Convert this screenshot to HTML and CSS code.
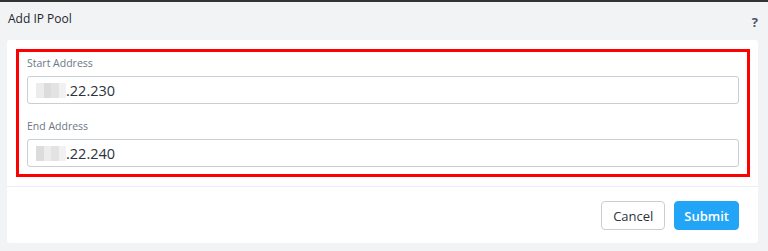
FILE: index.html
```html
<!DOCTYPE html>
<html lang="en">
<head>
    <meta charset="UTF-8">
    <meta name="viewport" content="width=device-width, initial-scale=1.0">
    <title>Add IP Pool</title>
    <link rel="stylesheet" href="styles.css">
</head>
<body>

    <div class="header">
        <h3>Add IP Pool</h3>
        <span class="help">?</span>
    </div>

    <div class="card">
        <div class="card-body">
            <div class="highlight">
                <div class="form-group">
                    <label>Start Address</label>
                    <div class="field">
                        <span class="blur"><i class="b1"></i><i class="b2"></i><i class="b3"></i><i class="b4"></i></span>.22.230
                    </div>
                </div>
                <div class="form-group">
                    <label>End Address</label>
                    <div class="field">
                        <span class="blur"><i class="b2"></i><i class="b1"></i><i class="b3"></i><i class="b4"></i></span>.22.240
                    </div>
                </div>
            </div>
        </div>
        <div class="card-footer">
            <button class="btn">Cancel</button>
            <button class="btn btn-primary">Submit</button>
        </div>
    </div>

</body>
</html>
```

FILE: styles.css
```css
body {
    margin: 0;
    font-family: "Open Sans", Arial, sans-serif;
    background-color: #f2f3f5;
    border-top: 2px solid #333;
}
.header {
    display: flex;
    justify-content: space-between;
    align-items: center;
    height: 38px;
    padding: 0 10px 0 8px;
}
.header h3 {
    margin: 0 0 6px;
    font-size: 12px;
    font-weight: normal;
    color: #22272e;
}
.help {
    font-size: 13px;
    font-weight: bold;
    color: #4a5668;
    margin-top: 1px;
}
.card {
    margin-left: 7px;
    width: 751px;
    background-color: white;
    border-radius: 3px;
}
.card-body {
    padding: 9px 8px 9px 9px;
    border-bottom: 1px solid #eceef1;
}
.highlight {
    border: 3px solid #f00;
    padding: 1px 8px 7px 8px;
}
.form-group label {
    display: block;
    font-size: 10.5px;
    color: #6c7686;
    line-height: 16px;
    margin: 2px 0 5px;
}
.form-group + .form-group {
    margin-top: 14px;
}
.field {
    display: flex;
    align-items: center;
    height: 26px;
    padding: 0 8px;
    border: 1px solid #c9ced6;
    border-radius: 3px;
    font-size: 14.5px;
    color: #2d333b;
}
.blur {
    display: flex;
    height: 15px;
}
.blur i {
    display: block;
    width: 7.5px;
    height: 15px;
}
.b1 { background-color: #ececec; }
.b2 { background-color: #dcdcdc; }
.b3 { background-color: #e3e3e3; }
.b4 { background-color: #f1f1f1; }
.card-footer {
    display: flex;
    justify-content: flex-end;
    gap: 9px;
    padding: 14px 19px 13px;
}
.btn {
    font-family: "Open Sans", Arial, sans-serif;
    font-size: 13px;
    height: 29px;
    padding: 0 11px;
    background-color: white;
    color: #2d333b;
    border: 1px solid #c9ced6;
    border-radius: 4px;
}
.btn-primary {
    padding: 0 9px;
    background-color: #22a5f7;
    border-color: #22a5f7;
    color: white;
    font-weight: 600;
}
```
